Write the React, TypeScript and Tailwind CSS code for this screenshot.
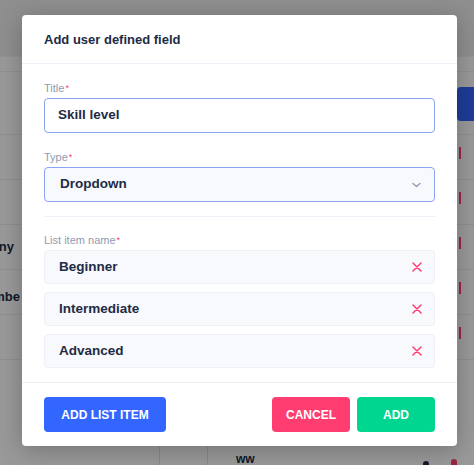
import React from 'react';

const items = ['Beginner', 'Intermediate', 'Advanced'];

const Label: React.FC<{ text: string }> = ({ text }) => (
  <div className="text-[11px] leading-[14px] text-[#8f9bb3] mb-[3px]">
    {text}
    <sup className="text-[#ff3d71] text-[9px] ml-[1px] relative -top-[1px]">*</sup>
  </div>
);

const XIcon = () => (
  <svg width="10" height="10" viewBox="0 0 10 10" fill="none">
    <path d="M1 1L9 9M9 1L1 9" stroke="#ff3d71" strokeWidth="1.5" strokeLinecap="round" />
  </svg>
);

const Chevron = () => (
  <svg width="9" height="6" viewBox="0 0 9 6" fill="none">
    <path d="M1 1.5L4.5 4.5L8 1.5" stroke="#8f9bb3" strokeWidth="1.4" strokeLinecap="round" strokeLinejoin="round" />
  </svg>
);

export default function App() {
  return (
    <div
      className="relative w-[474px] h-[465px] overflow-hidden bg-white"
      style={{ fontFamily: '"Liberation Sans", Arial, sans-serif' }}
    >
      {/* page behind the dialog */}
      <div className="flex flex-col w-full h-full">
        <div className="h-[57px] bg-[#eeeeee] border-b border-[#f4f4f4]" />
        <div className="h-[15px] border-b border-[#f0f0f0]" />
        <div className="flex h-[63px] border-b border-[#eeeeee]">
          <div className="flex-1" />
          <div className="w-[17px] mt-[15px] h-[34px] bg-[#3366ff] rounded-l-[4px]" />
        </div>
        {[0, 1, 2, 3, 4].map((i) => (
          <div key={i} className="flex h-[45px] border-b border-[#eeeeee] items-center">
            <div className="w-[22px] overflow-hidden flex justify-end">
              {i === 2 && <span className="text-[13px] font-bold text-[#222b45] whitespace-nowrap mr-[8px]">ny</span>}
              {i === 3 && <span className="text-[13px] font-bold text-[#222b45] whitespace-nowrap mr-[2px] mt-[10px]">mbe</span>}
            </div>
            <div className="flex-1" />
            <div className="w-[16px] flex items-start">
              <div className="w-[2px] h-[12px] bg-[#ff3d71] ml-[1px] -mt-[8px]" />
            </div>
          </div>
        ))}
        <div className="flex flex-1">
          <div className="w-[160px] border-r border-[#e4e4e4]" />
          <div className="w-[48px] border-r border-[#e4e4e4]" />
          <div className="flex-1 flex items-end pl-[28px] text-[12px] font-bold text-[#222b45]">
            <span className="leading-[12px]">ww</span>
            <div className="flex-1" />
            <div className="w-[6px] h-[6px] rounded-full bg-[#222b45] mr-[22px] -mb-[2px]" />
            <div className="w-[6px] h-[8px] rounded-t-full bg-[#ff3d71] mr-[17px] -mb-[2px]" />
          </div>
        </div>
      </div>

      {/* overlay */}
      <div className="absolute inset-0 bg-black/40" />

      {/* dialog */}
      <div className="absolute left-[22px] top-[15px] w-[435px] bg-white rounded-[4px] shadow-[0_4px_24px_rgba(0,0,0,0.25)]">
        <div className="h-[49px] px-[22px] flex items-center border-b border-[#edf1f7]">
          <h3 className="text-[13px] font-bold text-[#222b45] pt-[1px]">Add user defined field</h3>
        </div>

        <div className="px-[22px] pt-[17px] pb-[14px] flex flex-col">
          <Label text="Title" />
          <div className="h-[35px] rounded-[4px] border-[1.5px] border-[#8aa5f0] bg-white flex items-center px-[13px]">
            <span className="text-[13.5px] font-bold text-[#222b45]">Skill level</span>
          </div>

          <div className="mt-[17px]">
            <Label text="Type" />
          </div>
          <div className="h-[35px] rounded-[4px] border-[1.5px] border-[#8aa5f0] bg-[#f7f9fc] flex items-center justify-between pl-[15px] pr-[13px]">
            <span className="text-[13.5px] font-bold text-[#222b45]">Dropdown</span>
            <Chevron />
          </div>

          <div className="h-px bg-[#edf1f7] mt-[14px] mb-[16px]" />

          <Label text="List item name" />
          <div className="flex flex-col gap-[8px]">
            {items.map((item) => (
              <div
                key={item}
                className="h-[34px] rounded-[4px] border border-[#edf1f7] bg-[#f7f9fc] flex items-center justify-between pl-[14px] pr-[12px]"
              >
                <span className="text-[13.5px] font-bold text-[#222b45]">{item}</span>
                <XIcon />
              </div>
            ))}
          </div>
        </div>

        <div className="border-t border-[#edf1f7] px-[22px] pt-[14px] pb-[14px] flex items-center">
          <button className="h-[35px] w-[122px] rounded-[4px] bg-[#3366ff] text-white text-[12px] font-bold">
            ADD LIST ITEM
          </button>
          <div className="flex-1" />
          <button className="h-[35px] w-[78px] rounded-[4px] bg-[#ff3d71] text-white text-[12px] font-bold">
            CANCEL
          </button>
          <button className="h-[35px] w-[78px] ml-[7px] rounded-[4px] bg-[#00d68f] text-white text-[12px] font-bold">
            ADD
          </button>
        </div>
      </div>
    </div>
  );
}
